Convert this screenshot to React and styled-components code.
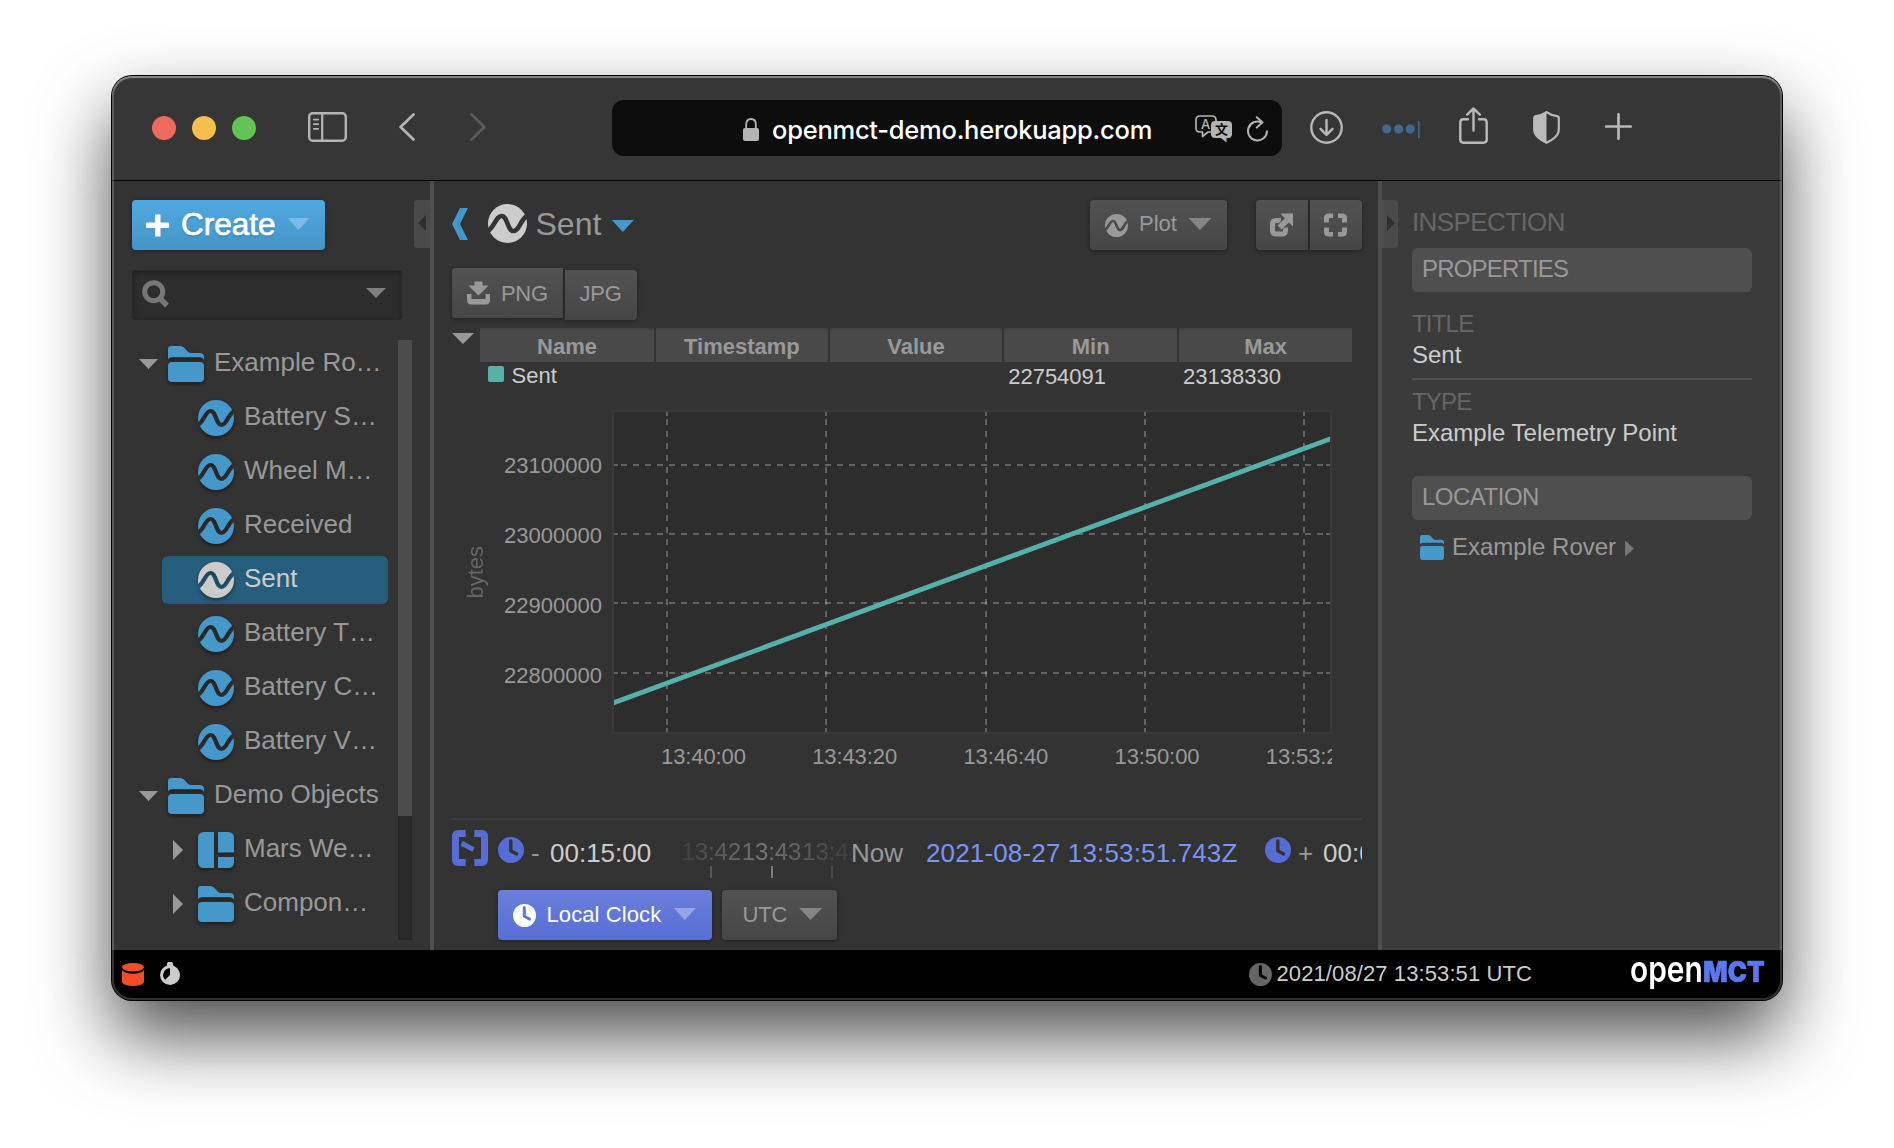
import React, { useId } from "react";
import styled, { createGlobalStyle, css } from "styled-components";

const c = {
  body: "#333333",
  dim: "#999999",
  bright: "#cccccc",
  faint: "#666666",
  key: "#4598c9",
  time: "#576dd5",
  splitter: "#4f4f4f",
};

const GlobalStyle = createGlobalStyle`
  * { box-sizing: border-box; }
  body { margin: 0; background: #fff; overflow: hidden; }
  svg { display: block; flex: none; }
`;

/* ---------- shared ---------- */

const Text = styled.span`
  display: block;
  flex: none;
  white-space: pre;
  font-size: ${(p) => p.$size || 22}px;
  line-height: 1.2;
  color: ${(p) => p.$color || "inherit"};
  letter-spacing: ${(p) => p.$track || 0}px;
  margin-left: ${(p) => p.$ml || 0}px;
  margin-top: ${(p) => p.$mt || 0}px;
`;

const Caret = styled.span`
  flex: none;
  width: ${(p) => p.$w || 22}px;
  height: ${(p) => p.$h || 12}px;
  margin-left: ${(p) => p.$ml || 0}px;
  margin-top: ${(p) => p.$mt || 0}px;
  background: ${(p) => p.$color || c.dim};
  clip-path: ${(p) =>
    ({
      down: "polygon(0 0, 100% 0, 50% 100%)",
      right: "polygon(0 0, 100% 50%, 0 100%)",
      left: "polygon(100% 0, 100% 100%, 0 50%)",
    })[p.$dir || "down"]};
`;

const Button = styled.div`
  display: flex;
  align-items: center;
  flex: none;
  width: ${(p) => p.$w}px;
  height: 50px;
  padding-left: ${(p) => p.$pl ?? 15}px;
  border-radius: ${(p) => p.$radius || "4px"};
  color: ${c.dim};
  background: linear-gradient(#525252, #464646);
  box-shadow: 0 1px 4px rgba(0, 0, 0, 0.35);
  ${(p) =>
    p.$tone === "create" &&
    css`
      color: #fff;
      background: linear-gradient(#4fa9e1, #4595c6);
    `}
  ${(p) =>
    p.$tone === "time" &&
    css`
      color: #fff;
      background: linear-gradient(#6b80da, #566dd5);
    `}
`;

/* ---------- icons ---------- */

function Icon({ w, h = w, vb, children, ...rest }) {
  return (
    <svg width={w} height={h} viewBox={vb || `0 0 ${w} ${h}`} {...rest}>
      {children}
    </svg>
  );
}

function TelemetryIcon({ size = 36, color = c.key }) {
  const id = useId();
  return (
    <Icon w={size} vb="0 0 36 36">
      <mask id={id}>
        <rect width="36" height="36" fill="#fff" />
        <path
          d="M-1 25.5C6 22.5 7 11 12.6 11C18 11 18 25 23.4 25C29 25 30 13.5 37 10.5"
          fill="none"
          stroke="#000"
          strokeWidth="4.2"
        />
      </mask>
      <circle cx="18" cy="18" r="18" fill={color} mask={`url(#${id})`} />
    </Icon>
  );
}

function FolderIcon({ size = 36, h = size }) {
  return (
    <Icon w={size} h={h} vb="0 0 36 36" preserveAspectRatio="none" fill={c.key}>
      <path d="M0 13.5V3Q0 0 3 0H12Q14.4 0 16 1.6L20 5.8Q21.3 7 23 7H32Q36 7 36 11V14Q35 11.3 32 11.3H4Q1 11.3 0 13.5Z" />
      <rect y="16" width="36" height="20" rx="4" />
    </Icon>
  );
}

const LayoutIcon = () => (
  <Icon w={36} fill={c.key}>
    <path d="M16 0H6Q0 0 0 6V30Q0 36 6 36H16Z" />
    <path d="M20 0H30Q36 0 36 6V20.5H20Z" />
    <path d="M20 25H36V30Q36 36 30 36H20Z" />
  </Icon>
);

function ClockIcon({ size = 26, color = c.time }) {
  const id = useId();
  return (
    <Icon w={size} vb="0 0 26 26">
      <mask id={id}>
        <rect width="26" height="26" fill="#fff" />
        <path
          d="M12.8 4V13.8L18.6 17"
          fill="none"
          stroke="#000"
          strokeWidth="3.4"
          strokeLinecap="round"
          strokeLinejoin="round"
        />
      </mask>
      <circle cx="13" cy="13" r="13" fill={color} mask={`url(#${id})`} />
    </Icon>
  );
}

const SearchIcon = () => (
  <Icon w={27} h={28} stroke="#777" fill="none">
    <circle cx="11.7" cy="11.7" r="9" strokeWidth="5" />
    <path d="M17.5 18L25 25.5" strokeWidth="5.4" />
  </Icon>
);

const DownloadIcon = () => (
  <Icon w={23} h={24} fill={c.dim}>
    <path d="M7.5 0.5H15.5V4.5H21.5L11.5 14.5L1.5 4.5H7.5Z" />
    <path d="M0 13H4.5V18H18.5V13H23V19Q23 23.5 18.5 23.5H4.5Q0 23.5 0 19Z" />
  </Icon>
);

const NewWindowIcon = () => (
  <Icon w={23} h={24}>
    <path
      d="M11 7.5H6Q2.5 7.5 2.5 11V17.5Q2.5 21 6 21H12Q15.5 21 15.5 17.5V14.5"
      fill="none"
      stroke={c.dim}
      strokeWidth="5"
    />
    <path d="M9 0.5H23V14.5L18.8 10.3L11 18L6 13L13.6 5.2Z" fill="#4c4c4c" />
    <path d="M10.5 0.5H23V13.5L18.8 9.4L11.6 16.6L7.5 12.5L14.8 5.2Z" fill={c.dim} />
  </Icon>
);

const FullscreenIcon = () => (
  <Icon w={23} h={24} fill={c.dim}>
    <path d="M9 0.5V5H5V9.5H0V5Q0 0.5 5 0.5Z" />
    <path d="M14 0.5V5H18V9.5H23V5Q23 0.5 18 0.5Z" />
    <path d="M9 23.5V19H5V14.5H0V19Q0 23.5 5 23.5Z" />
    <path d="M14 23.5V19H18V14.5H23V19Q23 23.5 18 23.5Z" />
  </Icon>
);

const ModeIcon = () => (
  <Icon w={36} fill="none" stroke={c.time}>
    <path d="M13.7 3.5H6.5Q3.5 3.5 3.5 6.5V29.5Q3.5 32.5 6.5 32.5H13.7" strokeWidth="7" />
    <path d="M22.3 3.5H29.5Q32.5 3.5 32.5 6.5V29.5Q32.5 32.5 29.5 32.5H22.3" strokeWidth="7" />
    <path d="M9.6 13.2L21.6 19.6" strokeWidth="5" />
  </Icon>
);

/* ---------- window ---------- */

const Window = styled.div`
  position: relative;
  display: flex;
  flex-direction: column;
  width: 1670px;
  height: 924px;
  margin: 76px 112px 148px;
  border-radius: 20px;
  background: ${c.body};
  color: ${c.dim};
  font-family: "Liberation Sans", Arial, sans-serif;
  box-shadow: 0 0 0 1px #000, 0 36px 74px rgba(0, 0, 0, 0.7);
`;

const WindowEdge = styled.div`
  position: absolute;
  inset: 0;
  border-radius: 20px;
  box-shadow: inset 0 2px 1px rgba(255, 255, 255, 0.28), inset 0 0 0 2px rgba(255, 255, 255, 0.19);
  pointer-events: none;
`;

const BrowserBar = styled.div`
  display: flex;
  align-items: flex-start;
  flex: none;
  height: 105px;
  border-bottom: 1px solid #000;
  border-radius: 20px 20px 0 0;
  background: #363636;
`;

const Slot = styled.div`
  flex: none;
  margin-left: ${(p) => p.$ml}px;
  margin-top: ${(p) => p.$mt}px;
`;

const Light = styled.span`
  flex: none;
  width: 24px;
  height: 24px;
  margin: 40px 0 0 ${(p) => p.$ml || 16}px;
  border-radius: 50%;
  background: ${(p) => p.$color};
`;

const UrlField = styled.div`
  display: flex;
  align-items: flex-start;
  flex: none;
  width: 670px;
  height: 56px;
  margin: 24px 0 0 126px;
  border-radius: 12px;
  background: #0d0d0d;
`;

const UrlText = styled.span`
  flex: none;
  width: 410px;
  margin: 14px 0 0 13px;
  color: #fff;
  font: 500 25.5px/32px Inter, sans-serif;
  letter-spacing: -0.25px;
  white-space: nowrap;
`;

const Badge = styled.span`
  position: absolute;
  left: ${(p) => p.$x}px;
  top: ${(p) => p.$y}px;
  color: ${(p) => p.$color};
  font: ${(p) => p.$weight} 13px/14px Inter, "Noto Sans CJK SC", sans-serif;
`;

const Translate = styled.div`
  position: relative;
  width: 37px;
  height: 28px;
`;

function BrowserChrome() {
  return (
    <BrowserBar>
      <Light $ml={40} $color="#ed6a5e" />
      <Light $color="#f5bf4f" />
      <Light $color="#61c554" />
      <Slot $ml={52} $mt={36}>
        <Icon w={39} h={30} fill="none" stroke="#b4b4b4" strokeLinecap="round">
          <rect x="1.2" y="1.2" width="36.6" height="27.6" rx="3.5" strokeWidth="2.4" />
          <path d="M14.2 1V29" strokeWidth="2.2" />
          <path d="M5.8 7.6H10.2M5.8 12.2H10.2M5.8 16.8H10.2" strokeWidth="1.7" />
        </Icon>
      </Slot>
      <Slot $ml={52} $mt={37}>
        <Icon w={16} h={28} fill="none" stroke="#b4b4b4" strokeWidth="2.7" strokeLinecap="round" strokeLinejoin="round">
          <path d="M14.5 1.5L1.6 14L14.5 26.5" />
        </Icon>
      </Slot>
      <Slot $ml={55} $mt={37}>
        <Icon w={16} h={28} fill="none" stroke="#5c5c5c" strokeWidth="2.7" strokeLinecap="round" strokeLinejoin="round">
          <path d="M1.5 1.5L14.4 14L1.5 26.5" />
        </Icon>
      </Slot>
      <UrlField>
        <Slot $ml={131} $mt={18}>
          <Icon w={16} h={23}>
            <rect y="10" width="16" height="13" rx="2" fill="#b4b4b4" />
            <path d="M3.2 11V6.5Q3.2 1 8 1Q12.8 1 12.8 6.5V11" fill="none" stroke="#b4b4b4" strokeWidth="1.8" />
          </Icon>
        </Slot>
        <UrlText>openmct-demo.herokuapp.com</UrlText>
        <Slot $ml={13} $mt={15}>
          <Translate>
            <Icon w={37} h={28}>
              <path
                d="M17 17H13L7.5 21.5V17H5Q1 17 1 13V5Q1 1 5 1H17Q21 1 21 5V6"
                fill="none"
                stroke="#b4b4b4"
                strokeWidth="1.7"
                strokeLinejoin="round"
              />
              <path
                d="M20 6H33Q37 6 37 10V19Q37 23 33 23H31.5V27.5L26 23H20Q16 23 16 19V10Q16 6 20 6Z"
                fill="#b4b4b4"
              />
            </Icon>
            <Badge $x={6} $y={2} $color="#b4b4b4" $weight={500}>A</Badge>
            <Badge $x={20} $y={7} $color="#0d0d0d" $weight={700}>文</Badge>
          </Translate>
        </Slot>
        <Slot $ml={15} $mt={16}>
          <Icon w={21} h={26} fill="none" stroke="#b4b4b4" strokeWidth="2" strokeLinecap="round" strokeLinejoin="round">
            <path d="M20 15.3A9.5 9.5 0 1 1 14.6 6.4M9.8 1.2L15.4 6.3L9.8 11.6" />
          </Icon>
        </Slot>
      </UrlField>
      <Slot $ml={28} $mt={35}>
        <Icon w={33} h={33} fill="none" stroke="#b9b9b9" strokeWidth="2.4" strokeLinecap="round" strokeLinejoin="round">
          <circle cx="16.5" cy="16.5" r="15.2" />
          <path d="M16.5 9V23.5M10.5 17.8L16.5 23.8L22.5 17.8" />
        </Icon>
      </Slot>
      <Slot $ml={39} $mt={44}>
        <Icon w={38} h={19} fill="#44678f">
          <circle cx="4.7" cy="9" r="4.6" />
          <circle cx="16.6" cy="9" r="4.6" />
          <circle cx="28.2" cy="9" r="4.6" />
          <rect x="36" y="1" width="1.6" height="17" />
        </Icon>
      </Slot>
      <Slot $ml={39} $mt={31}>
        <Icon w={29} h={37} fill="none" stroke="#b9b9b9" strokeWidth="2.4" strokeLinecap="round" strokeLinejoin="round">
          <path d="M9 12.2H4.5Q1.3 12.2 1.3 15.4V32.5Q1.3 35.7 4.5 35.7H24.5Q27.7 35.7 27.7 32.5V15.4Q27.7 12.2 24.5 12.2H20M14.5 23.5V1.5M8.2 7.6L14.5 1.4L20.8 7.6" />
        </Icon>
      </Slot>
      <Slot $ml={45} $mt={35}>
        <Icon w={27} h={33}>
          <path
            d="M13.5 1.2C17 3.8 21 4.8 24 5.1Q25.8 5.3 25.8 7.2V18C25.8 25 20 28.5 13.5 31.8C7 28.5 1.2 25 1.2 18V7.2Q1.2 5.3 3 5.1C6 4.8 10 3.8 13.5 1.2Z"
            fill="none"
            stroke="#b9b9b9"
            strokeWidth="2.2"
          />
          <path d="M13.5 1.2V31.8C7 28.5 1.2 25 1.2 18V7.2Q1.2 5.3 3 5.1C6 4.8 10 3.8 13.5 1.2Z" fill="#b9b9b9" />
        </Icon>
      </Slot>
      <Slot $ml={45} $mt={37}>
        <Icon w={27} h={27} stroke="#b9b9b9" strokeWidth="2.7" strokeLinecap="round">
          <path d="M13.5 1.3V25.7M1.3 13.5H25.7" />
        </Icon>
      </Slot>
    </BrowserBar>
  );
}

/* ---------- left pane ---------- */

const Main = styled.div`
  display: flex;
  flex: 1;
  min-height: 0;
`;

const TreePane = styled.div`
  display: flex;
  flex: none;
  width: 318px;
  padding: 19px 0 0 20px;
`;

const TreeColumn = styled.div`
  flex: none;
  width: 282px;
`;

const CollapseTab = styled.div`
  display: flex;
  align-items: center;
  flex: none;
  width: 16px;
  height: 48px;
  padding: 0 4px 2px;
  border-radius: ${(p) => (p.$side === "left" ? "4px 0 0 4px" : "0 4px 4px 0")};
  background: #4a4a4a;
`;

const Splitter = styled.div`
  flex: none;
  width: 4px;
  background: ${c.splitter};
`;

const CreateLabel = styled(Text)`
  -webkit-text-stroke: 0.7px #fff;
  text-shadow: 0 2px 2px rgba(0, 0, 0, 0.15);
`;

const SearchBox = styled.div`
  display: flex;
  align-items: center;
  justify-content: space-between;
  width: 270px;
  height: 50px;
  margin-top: 20px;
  padding: 0 16px 2px 10px;
  border-radius: 4px;
  background: #2d2d2d;
  box-shadow: inset 0 0 0 1px #282828, inset 0 2px 6px rgba(0, 0, 0, 0.4);
`;

const TreeBody = styled.div`
  display: flex;
  justify-content: space-between;
  width: 280px;
  height: 600px;
  margin-top: 20px;
`;

const TreeList = styled.div`
  display: flex;
  flex-direction: column;
  gap: 6px;
  width: 256px;
`;

const TreeRow = styled.div`
  display: flex;
  align-items: center;
  height: 48px;
  margin-left: ${(p) => (p.$child ? 30 : 0)}px;
  padding-left: ${(p) => (p.$child ? 11 : 7)}px;
  border-radius: 6px;
  background: ${(p) => (p.$selected ? "#275d7c" : "transparent")};
  color: ${(p) => (p.$selected ? c.bright : c.dim)};
`;

const TreeArrow = styled.span`
  display: flex;
  flex: none;
  width: ${(p) => (p.$child ? 25 : 29)}px;
`;

const IconShadow = styled.span`
  flex: none;
  filter: drop-shadow(0 2px 2px rgba(0, 0, 0, 0.45));
`;

const ScrollTrack = styled.div`
  width: 14px;
  height: 600px;
  background: #2b2b2b;
  box-shadow: inset 0 0 3px rgba(0, 0, 0, 0.3);
`;

const ScrollThumb = styled.div`
  height: 476px;
  background: #4c4c4c;
`;

const treeItems = [
  { label: "Example Ro…", icon: "folder", arrow: "down" },
  { label: "Battery S…", icon: "telemetry", child: true },
  { label: "Wheel M…", icon: "telemetry", child: true },
  { label: "Received", icon: "telemetry", child: true },
  { label: "Sent", icon: "telemetry", child: true, selected: true },
  { label: "Battery T…", icon: "telemetry", child: true },
  { label: "Battery C…", icon: "telemetry", child: true },
  { label: "Battery V…", icon: "telemetry", child: true },
  { label: "Demo Objects", icon: "folder", arrow: "down" },
  { label: "Mars We…", icon: "layout", arrow: "right", child: true },
  { label: "Compon…", icon: "folder", arrow: "right", child: true },
];

function TreeIcon({ name, selected }) {
  if (name === "folder") return <FolderIcon />;
  if (name === "layout") return <LayoutIcon />;
  return <TelemetryIcon color={selected ? c.bright : c.key} />;
}

function ObjectTree() {
  return (
    <TreePane>
      <TreeColumn>
        <Button $tone="create" $w={193} $pl={14}>
          <Icon w={23} h={23} fill="#fff">
            <path d="M9 0.5H14.5V8.5H22Q23 8.5 23 9.5V13Q23 14 22 14H14.5V22.5H9V14H1Q0 14 0 13V9.5Q0 8.5 1 8.5H9Z" />
          </Icon>
          <CreateLabel $size={31.5} $ml={12}>Create</CreateLabel>
          <Caret $color="#7bbbe5" $ml={12} $mt={-2} />
        </Button>
        <SearchBox>
          <SearchIcon />
          <Caret $w={20} $h={10} $color="#808080" $mt={-2} />
        </SearchBox>
        <TreeBody>
          <TreeList>
            {treeItems.map((item) => (
              <TreeRow key={item.label} $child={item.child} $selected={item.selected}>
                <TreeArrow $child={item.child}>
                  {item.arrow === "down" && <Caret $w={19} $h={10} />}
                  {item.arrow === "right" && <Caret $dir="right" $w={10} $h={20} />}
                </TreeArrow>
                <IconShadow>
                  <TreeIcon name={item.icon} selected={item.selected} />
                </IconShadow>
                <Text $size={26} $ml={10} $mt={-3}>{item.label}</Text>
              </TreeRow>
            ))}
          </TreeList>
          <ScrollTrack>
            <ScrollThumb />
          </ScrollTrack>
        </TreeBody>
      </TreeColumn>
      <CollapseTab $side="left">
        <Caret $dir="left" $w={8} $h={16} $color="#2f2f2f" />
      </CollapseTab>
    </TreePane>
  );
}

/* ---------- center pane ---------- */

const PlotPane = styled.div`
  display: flex;
  flex-direction: column;
  flex: none;
  width: 944px;
  padding: 19px 16px 0 18px;
`;

const ViewHeader = styled.div`
  display: flex;
  align-items: center;
  flex: none;
  height: 50px;
`;

const Spacer = styled.div`
  flex: 1;
`;

const ButtonPair = styled.div`
  display: flex;
  gap: 2px;
  margin-left: 29px;
`;

const ExportRow = styled.div`
  display: flex;
  align-items: flex-start;
  flex: none;
  gap: 2px;
  height: 52px;
  margin-top: 18px;
`;

const LowerButton = styled(Button)`
  margin-top: 2px;
`;

const Legend = styled.div`
  display: flex;
  align-items: flex-start;
  flex: none;
  height: 90px;
  padding-top: 8px;
`;

const LegendTable = styled.div`
  width: 872px;
  margin-left: 6px;
`;

const LegendRow = styled.div`
  display: grid;
  grid-template-columns: 174px 172px 172.5px 173px 173px;
  column-gap: 1.9px;
`;

const HeadCell = styled.div`
  height: 34px;
  padding-top: 6px;
  background: #494949;
  box-shadow: inset 0 2px 0 #424242;
  font-size: 22px;
  font-weight: 700;
  line-height: 26px;
  text-align: center;
`;

const BodyCell = styled.div`
  display: flex;
  align-items: flex-start;
  padding: ${(p) => (p.$swatch ? "4px 0 0 8px" : "2px 0 0 4px")};
  color: ${c.bright};
`;

const Swatch = styled.span`
  width: 16px;
  height: 16px;
  border-radius: 2px;
  background: #55b1aa;
`;

const Plot = styled.div`
  display: grid;
  grid-template-columns: 160px 720px;
  grid-template-rows: 324px 84px;
  flex: none;
`;

const YAxis = styled.div`
  display: flex;
  justify-content: space-between;
  padding: 0 10px 0 11px;
`;

const AxisName = styled.span`
  align-self: center;
  writing-mode: vertical-rl;
  transform: rotate(180deg);
  color: ${c.faint};
  font-size: 22px;
  line-height: 26px;
`;

const YTicks = styled.div`
  display: grid;
  grid-auto-rows: 70.3px;
  align-items: center;
  align-content: start;
  padding-top: 20.6px;
`;

const XTicks = styled.div`
  grid-column: 2;
  display: flex;
  overflow: hidden;
  padding: 10px 0 0 49px;
`;

const XTick = styled.div`
  flex: 0 0 151.2px;
`;

const PlotArea = styled.div`
  border: 2px solid #3a3a3a;
  background: #2d2d2d;
`;

const gridX = [53, 212, 372, 531, 690];
const gridY = [53, 122, 191, 261];

const dashPattern = (count) => ["4 3", ...Array(count).fill("6 6"), "6 3 4 20"].join(" ");
const vDash = dashPattern(25);
const hDash = dashPattern(58);

function Chart() {
  return (
    <PlotArea>
      <Icon w={716} h={320}>
        <g stroke="#fff" strokeOpacity="0.26" strokeWidth="2">
          {gridX.map((x) => (
            <path key={x} d={`M${x} 0V320`} strokeDasharray={vDash} />
          ))}
          {gridY.map((y) => (
            <path key={y} d={`M0 ${y}H716`} strokeDasharray={hDash} />
          ))}
        </g>
        <path d="M-2 291.4L718 26.3" stroke="#55b1aa" strokeWidth="4.8" />
      </Icon>
    </PlotArea>
  );
}

const Conductor = styled.div`
  display: flex;
  align-items: flex-start;
  flex: none;
  width: 910px;
  height: 131px;
  overflow: hidden;
  border-top: 2px solid #3d3d3d;
`;

const ModeSlot = styled.div`
  flex: none;
  width: 46px;
  padding-top: 10px;
`;

const ConductorBody = styled.div`
  flex: none;
  width: 1000px;
`;

const TimeRow = styled.div`
  display: grid;
  grid-template-columns: 26px 26px 126px 175px 75px 339px 26px 32px 120px;
  height: 70px;
  padding-top: 17px;
`;

const Offset = styled.div`
  padding-top: ${(p) => p.$pt ?? 1}px;
  padding-left: ${(p) => p.$pl || 0}px;
`;

const Ruler = styled.div`
  display: grid;
  grid-template-columns: repeat(3, 60.4px);
  justify-content: start;
  padding: 1px 0 0 5px;
  overflow: hidden;
  mask-image: linear-gradient(90deg, transparent -8%, #000 50%, transparent 108%);
`;

const RulerMark = styled.div`
  display: flex;
  flex-direction: column;
  align-items: center;
  color: #777;
  font-size: 24px;
  line-height: 28px;
  letter-spacing: -0.1px;

  &::after {
    content: "";
    width: 2px;
    height: 12px;
    background: #808080;
  }
`;

const ClockButtons = styled.div`
  display: flex;
  gap: 10px;
`;

function PlotView() {
  return (
    <PlotPane>
      <ViewHeader>
        <Slot $ml={0} $mt={-2}>
          <Icon w={16} h={32} fill={c.key}>
            <path d="M8 0H16L8 16L16 32H8L0 16Z" />
          </Icon>
        </Slot>
        <Slot $ml={19.5} $mt={-3}>
          <TelemetryIcon size={39} color={c.bright} />
        </Slot>
        <Text $size={32} $ml={9} $mt={-1}>Sent</Text>
        <Caret $color={c.key} $ml={10.5} $mt={2} />
        <Spacer />
        <Button $w={137}>
          <TelemetryIcon size={23} color={c.dim} />
          <Text $ml={11} $mt={-1}>Plot</Text>
          <Caret $w={23} $ml={11.5} $mt={-2} $color="#858585" />
        </Button>
        <ButtonPair>
          <Button $w={52} $pl={14} $radius="4px 0 0 4px">
            <NewWindowIcon />
          </Button>
          <Button $w={52} $pl={14} $radius="0 4px 4px 0">
            <FullscreenIcon />
          </Button>
        </ButtonPair>
      </ViewHeader>

      <ExportRow>
        <Button $w={111} $radius="4px 0 0 4px">
          <DownloadIcon />
          <Text $ml={11} $mt={2} $track={-0.3}>PNG</Text>
        </Button>
        <LowerButton $w={72} $radius="0 4px 4px 0" $pl={14.5}>
          <Text $track={-0.2} $mt={-1}>JPG</Text>
        </LowerButton>
      </ExportRow>

      <Legend>
        <Caret $h={11} $mt={5} />
        <LegendTable>
          <LegendRow>
            {["Name", "Timestamp", "Value", "Min", "Max"].map((h) => (
              <HeadCell key={h}>{h}</HeadCell>
            ))}
          </LegendRow>
          <LegendRow>
            <BodyCell $swatch>
              <Swatch />
              <Text $ml={7.5} $mt={-3}>Sent</Text>
            </BodyCell>
            <BodyCell />
            <BodyCell />
            <BodyCell>
              <Text>22754091</Text>
            </BodyCell>
            <BodyCell>
              <Text>23138330</Text>
            </BodyCell>
          </LegendRow>
        </LegendTable>
      </Legend>

      <Plot>
        <YAxis>
          <AxisName>bytes</AxisName>
          <YTicks>
            {["23100000", "23000000", "22900000", "22800000"].map((t) => (
              <Text key={t}>{t}</Text>
            ))}
          </YTicks>
        </YAxis>
        <Chart />
        <XTicks>
          {["13:40:00", "13:43:20", "13:46:40", "13:50:00", "13:53:20"].map((t) => (
            <XTick key={t}>
              <Text $track={-0.1}>{t}</Text>
            </XTick>
          ))}
        </XTicks>
      </Plot>

      <Conductor>
        <ModeSlot>
          <ModeIcon />
        </ModeSlot>
        <ConductorBody>
          <TimeRow>
            <ClockIcon />
            <Offset $pl={7}>
              <Text $size={26}>-</Text>
            </Offset>
            <Offset>
              <Text $size={26} $color={c.bright}>00:15:00</Text>
            </Offset>
            <Ruler>
              <RulerMark>13:42</RulerMark>
              <RulerMark>13:43</RulerMark>
              <RulerMark>13:44</RulerMark>
            </Ruler>
            <Offset>
              <Text $size={26}>Now</Text>
            </Offset>
            <Offset>
              <Text $size={26} $color="#7a94f6" $track={0.15}>2021-08-27 13:53:51.743Z</Text>
            </Offset>
            <ClockIcon />
            <Offset $pl={7}>
              <Text $size={26}>+</Text>
            </Offset>
            <Offset>
              <Text $size={26} $color={c.bright}>00:00:30</Text>
            </Offset>
          </TimeRow>
          <ClockButtons>
            <Button $tone="time" $w={214}>
              <ClockIcon size={23} color="#fff" />
              <Text $ml={10.5} $track={0.1}>Local Clock</Text>
              <Caret $ml={12.5} $mt={-2} $color="#97a5e6" />
            </Button>
            <Button $w={115} $pl={20.5}>
              <Text $track={-0.2}>UTC</Text>
              <Caret $ml={12} $mt={-2} $w={23} $color="#858585" />
            </Button>
          </ClockButtons>
        </ConductorBody>
      </Conductor>
    </PlotPane>
  );
}

/* ---------- inspector ---------- */

const InspectorPane = styled.div`
  display: flex;
  flex: 1;
  padding-top: 19px;
  background: #3b3b3b;
`;

const InspectorBody = styled.div`
  width: 340px;
  margin-left: 14px;
  font-size: 24px;
`;

const InspectorTitle = styled.div`
  height: 48px;
  padding-top: 7px;
  color: ${c.faint};
`;

const SectionBar = styled.div`
  display: flex;
  align-items: center;
  height: 44px;
  padding: 0 0 2px 10px;
  border-radius: 6px;
  background: #4f4f4f;
`;

const Property = styled.div`
  height: ${(p) => p.$h}px;
  padding-top: ${(p) => p.$pt}px;
  border-bottom: ${(p) => (p.$line ? "2px solid #505050" : "none")};
`;

const Location = styled.div`
  display: flex;
  align-items: center;
  height: 54px;
  padding-left: 8px;
`;

function Inspector() {
  return (
    <InspectorPane>
      <CollapseTab $side="right">
        <Caret $dir="right" $w={8} $h={16} $color="#2f2f2f" $ml={1} />
      </CollapseTab>
      <InspectorBody>
        <InspectorTitle>
          <Text $size={26} $track={-0.6}>INSPECTION</Text>
        </InspectorTitle>
        <SectionBar>
          <Text $size={24} $track={-0.8} $mt={1}>PROPERTIES</Text>
        </SectionBar>
        <Property $h={88} $pt={17.5} $line>
          <Text $size={24} $color={c.faint} $track={-0.8}>TITLE</Text>
          <Text $size={24} $color={c.bright} $mt={3}>Sent</Text>
        </Property>
        <Property $h={96} $pt={7.5}>
          <Text $size={24} $color={c.faint} $track={-0.8}>TYPE</Text>
          <Text $size={24} $color={c.bright} $mt={3}>Example Telemetry Point</Text>
        </Property>
        <SectionBar>
          <Text $size={24} $track={-0.5}>LOCATION</Text>
        </SectionBar>
        <Location>
          <FolderIcon size={24} h={25} />
          <Text $size={24} $ml={8}>Example Rover</Text>
          <Caret $dir="right" $w={9} $h={16} $ml={9} $mt={3} $color="#777" />
        </Location>
      </InspectorBody>
    </InspectorPane>
  );
}

/* ---------- status bar ---------- */

const StatusBar = styled.div`
  display: flex;
  align-items: center;
  flex: none;
  height: 50px;
  padding: 0 16px 2px 10px;
  border-radius: 0 0 20px 20px;
  background: #000;
`;

const Logo = styled.div`
  display: flex;
  align-items: baseline;
  width: 136px;
  margin-left: 98px;
  margin-top: -8px;
  font-family: Inter, sans-serif;
  line-height: 44px;
`;

const LogoPart = styled.span`
  display: block;
  width: ${(p) => p.$w}px;
  color: ${(p) => p.$color};
  font-size: ${(p) => p.$size}px;
  font-weight: ${(p) => p.$weight};
  white-space: nowrap;
  transform: scaleX(${(p) => p.$sx});
  transform-origin: 0 0;
  -webkit-text-stroke: ${(p) => p.$stroke || 0}px ${(p) => p.$color};
`;

function Status() {
  return (
    <StatusBar>
      <Icon w={22} h={23} fill="#f04e26">
        <ellipse cx="11" cy="4.2" rx="11" ry="4.2" />
        <path d="M0 7Q3 10.8 11 10.8Q19 10.8 22 7V19Q20 23 11 23Q2 23 0 19Z" />
      </Icon>
      <Slot $ml={16} $mt={-1}>
        <Icon w={20} h={23}>
          <rect x="7" y="0" width="6" height="5" rx="1.5" fill={c.bright} />
          <circle cx="10" cy="13" r="10" fill={c.bright} />
          <path d="M10 6.2V13L5.2 17.8A6.8 6.8 0 0 1 10 6.2Z" fill="#000" />
        </Icon>
      </Slot>
      <Spacer />
      <ClockIcon size={23} color="#666" />
      <Text $ml={5} $color={c.bright} $track={0.1}>2021/08/27 13:53:51 UTC</Text>
      <Logo>
        <LogoPart $w={73} $size={36} $weight={600} $color="#fff" $sx={0.83}>open</LogoPart>
        <LogoPart $w={62} $size={28} $weight={900} $color="#5b78f0" $sx={0.92} $stroke={0.6}>MCT</LogoPart>
      </Logo>
    </StatusBar>
  );
}

export default function App() {
  return (
    <>
      <GlobalStyle />
      <Window>
        <BrowserChrome />
        <Main>
          <ObjectTree />
          <Splitter />
          <PlotView />
          <Splitter />
          <Inspector />
        </Main>
        <Status />
        <WindowEdge />
      </Window>
    </>
  );
}
